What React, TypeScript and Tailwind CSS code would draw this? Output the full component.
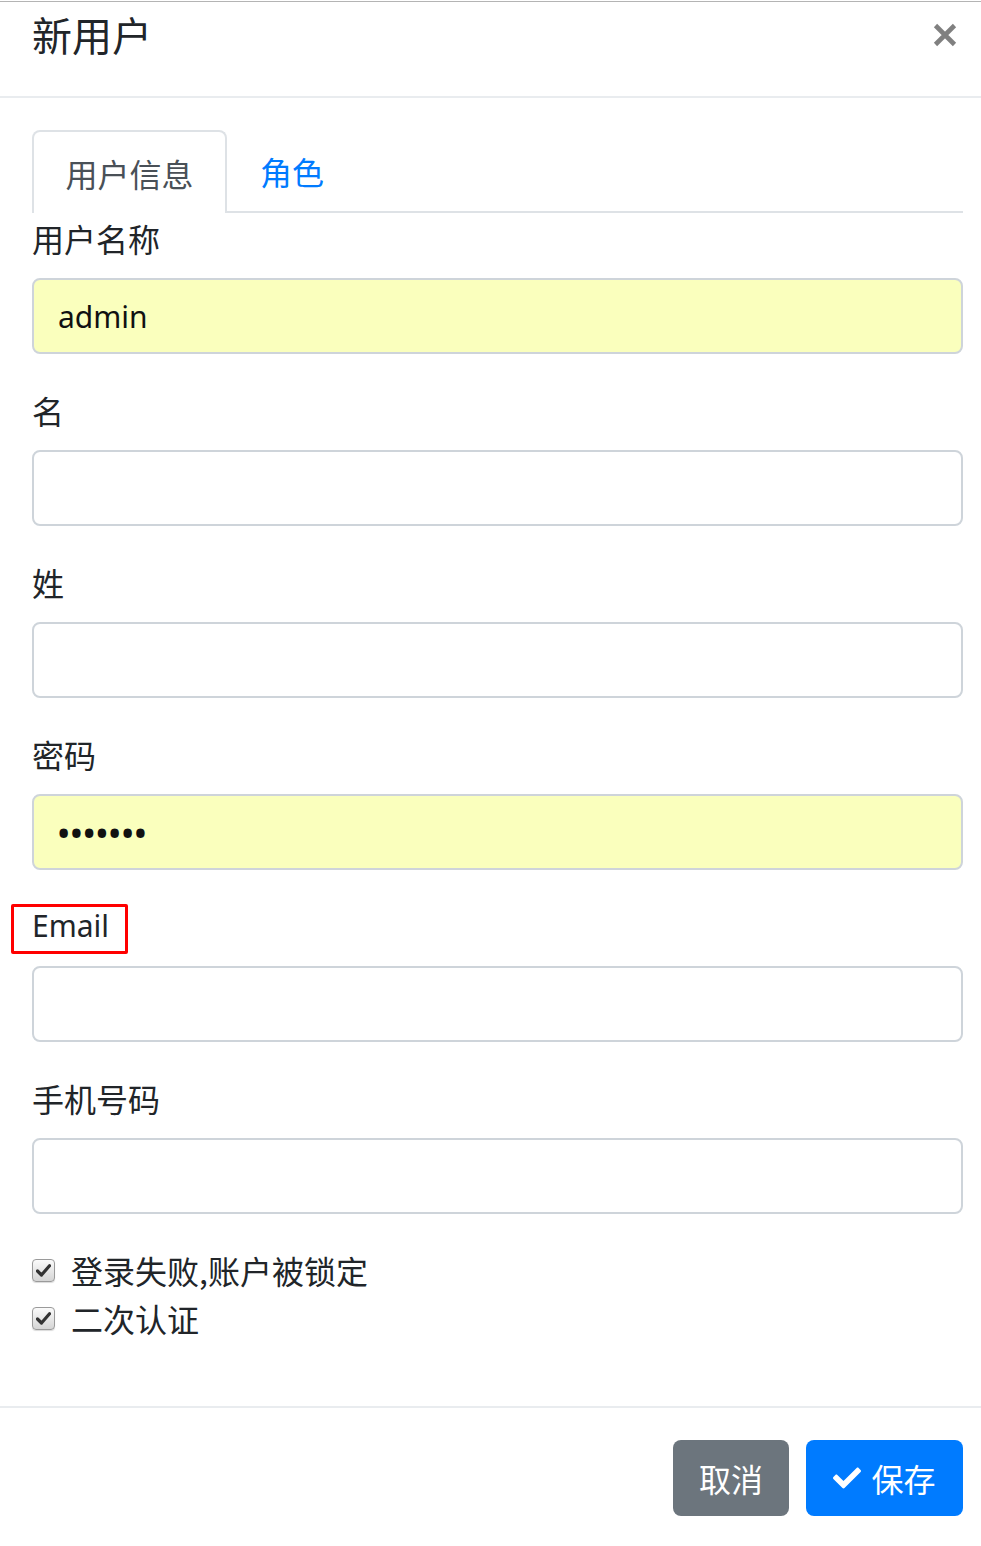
import React from "react";

const cjk = { fontFamily: '"Noto Sans CJK SC", "Noto Sans", sans-serif' };
const latin = { fontFamily: '"Noto Sans", "Noto Sans CJK SC", sans-serif' };

function Field({ label, value, filled, password, latinLabel, annotate }: { label: string; value?: string; filled?: boolean; password?: boolean; latinLabel?: boolean; annotate?: boolean }) {
  return (
    <div className="mb-[32px]">
      <div className="relative h-[48px] mb-[16px] flex items-center">
        <span className={`${latinLabel ? "text-[30px]" : "text-[32px]"} leading-[48px] text-[#212529]`} style={latinLabel ? latin : cjk}>{label}</span>
        {annotate && (
          <div className="absolute left-[-21px] top-[2px] w-[117px] h-[50px] border-[3px] border-[#ff0000] rounded-[2px]" />
        )}
      </div>
      <div
        className={`h-[76px] rounded-[8px] border-2 border-[#ced4da] flex items-center px-[24px] text-[30px] ${filled ? "bg-[#faffbd]" : "bg-white"} text-[#111]`}
        style={latin}
      >
        {password ? <span className="tracking-[1.5px] text-[30px] font-bold">•••••••</span> : value}
      </div>
    </div>
  );
}

function Check({ label }: { label: string }) {
  return (
    <div className="h-[48px] flex items-center">
      <div className="w-[23px] h-[23px] rounded-[4px] border border-[#9a9a9a] bg-gradient-to-b from-[#fbfbfb] to-[#d5d5d5] flex items-center justify-center shadow-[0_1px_1px_rgba(0,0,0,0.15)]">
        <svg width="15" height="13" viewBox="0 0 15 13">
          <path d="M1.5 7 L5.5 11 L13.5 1.8" fill="none" stroke="#333" strokeWidth="3.2" strokeLinecap="round" strokeLinejoin="round" />
        </svg>
      </div>
      <span className="ml-[16px] text-[32px] leading-[48px] text-[#212529]" style={cjk}>{label}</span>
    </div>
  );
}

export default function App() {
  return (
    <div className="w-[981px] h-[1546px] bg-white overflow-hidden">
      <div className="h-[1px] bg-white" />
      <div className="h-[1px] bg-[#b4b4b4]" />
      {/* header */}
      <div className="h-[96px] border-b-2 border-[#e9ecef] flex items-start justify-between pl-[32px] pr-[24px] pt-[2px]">
        <span className="text-[40px] leading-[60px] text-[#212529]" style={cjk}>新用户</span>
        <svg className="mt-[19px]" width="24" height="24" viewBox="0 0 24 24">
          <path d="M2.5 2.5 L21.5 21.5 M21.5 2.5 L2.5 21.5" stroke="#808080" strokeWidth="4.6" strokeLinecap="butt" />
        </svg>
      </div>
      {/* body */}
      <div className="pt-[32px] pb-[32px] pl-[32px] pr-[18px]">
        <div className="flex border-b-2 border-[#dee2e6] h-[83px]">
          <div className="w-[195px] h-[83px] -mb-[2px] border-2 border-b-0 border-[#dee2e6] rounded-t-[8px] bg-white flex items-center justify-center text-[32px] text-[#495057]" style={cjk}>
            用户信息
          </div>
          <div className="h-[81px] pl-[33px] flex items-center text-[32px] text-[#007bff]" style={cjk}>
            角色
          </div>
        </div>
        <div className="pt-[1px]">
          <Field label="用户名称" value="admin" filled />
          <Field label="名" />
          <Field label="姓" />
          <Field label="密码" filled password />
          <Field label="Email" latinLabel annotate />
          <Field label="手机号码" />
          <div className="mb-[32px]">
            <Check label="登录失败,账户被锁定" />
            <Check label="二次认证" />
          </div>
        </div>
      </div>
      {/* footer */}
      <div className="border-t-2 border-[#e9ecef] flex justify-end gap-[17px] pr-[18px] pt-[32px]">
        <div className="h-[76px] w-[116px] rounded-[8px] bg-[#6c757d] text-white text-[32px] flex items-center justify-center" style={cjk}>
          取消
        </div>
        <div className="h-[76px] w-[157px] rounded-[8px] bg-[#007bff] text-white text-[32px] flex items-center justify-center gap-[10px]" style={cjk}>
          <svg width="28" height="28" viewBox="0 0 512 512">
            <path fill="white" d="M173.898 439.404l-166.4-166.4c-9.997-9.997-9.997-26.206 0-36.204l36.203-36.204c9.997-9.998 26.207-9.998 36.204 0L192 312.69 432.095 72.596c9.997-9.997 26.207-9.997 36.204 0l36.203 36.204c9.997 9.997 9.997 26.206 0 36.204l-294.4 294.401c-9.998 9.997-26.207 9.997-36.204-.001z" />
          </svg>
          保存
        </div>
      </div>
    </div>
  );
}
